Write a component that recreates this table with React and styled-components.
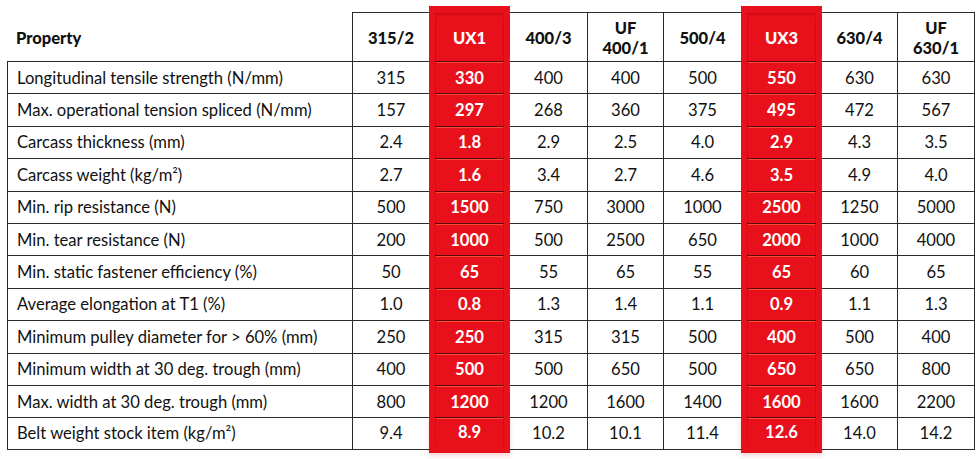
import React from 'react'
import styled, { createGlobalStyle, css } from 'styled-components'

const GlobalStyle = createGlobalStyle`
  html, body {
    margin: 0;
    background: #fff;
  }
  body {
    font-family: "Lato", "Liberation Sans", sans-serif;
    color: #111;
  }
`

const RED = '#e8101b'
const LINE = '#2a2a2a'

const Page = styled.div`
  padding: 12px 0 0 7px;
  width: 980px;
  height: 459px;
  box-sizing: border-box;
  overflow: hidden;
`

const Grid = styled.div`
  display: grid;
  grid-template-columns: 345px 77px 81px 77px 76px 78px 81px 75px 78px;
  grid-template-rows: 49px repeat(12, 32.4px);
  width: 968px;
`

const Cell = styled.div`
  display: flex;
  align-items: center;
  justify-content: ${(p) => (p.$left ? 'flex-start' : 'center')};
  text-align: center;
  box-sizing: border-box;
  padding: ${(p) => (p.$left ? '0 0 0 9px' : '0')};
  font-size: 16.6px;
  border-top: 1px solid ${LINE};
  border-left: ${(p) => (p.$noLeft ? 'none' : `1px solid ${LINE}`)};
  border-right: ${(p) => (p.$last ? `1px solid ${LINE}` : 'none')};
  border-bottom: ${(p) => (p.$bottom ? `1px solid ${LINE}` : 'none')};
  ${(p) =>
    p.$head &&
    css`
      font-weight: 900;
      font-size: 16.5px;
      line-height: 20px;
      padding-top: 2px;
    `}
  ${(p) =>
    p.$blank &&
    css`
      border: none;
      padding-top: 2px;
    `}
`

const HlCell = styled.div`
  background: ${RED};
  padding: 0 6px;
  display: flex;
  box-sizing: border-box;
  ${(p) =>
    p.$head &&
    css`
      margin-top: -6px;
      padding-top: 7px;
    `}
  ${(p) =>
    p.$bottom &&
    css`
      margin-bottom: -3px;
      padding-bottom: 6px;
      box-shadow: 0 3px 5px rgba(230, 20, 30, 0.18);
    `}
`

const HlInner = styled.div`
  flex: 1;
  display: flex;
  align-items: center;
  justify-content: center;
  text-align: center;
  color: #fff;
  font-weight: 700;
  font-size: ${(p) => (p.$head ? '16.5px' : '16.6px')};
  line-height: 20px;
  ${(p) =>
    p.$head
      ? css`
          font-weight: 900;
          box-shadow: inset 1px 0 0 #cf0d18, inset -1px 0 0 #cf0d18,
            inset 0 2px 2px rgba(120, 0, 0, 0.25);
          padding-top: 2px;
        `
      : css`
          border-top: 1px solid #5a0808;
          box-shadow: inset 1px 0 0 #cf0d18, inset -1px 0 0 #cf0d18,
            inset 0 1px 0 #ff4b2e;
        `}
`

const columns = ['315/2', 'UX1', '400/3', 'UF\n400/1', '500/4', 'UX3', '630/4', 'UF\n630/1']
const highlighted = [1, 5]

const rows = [
  ['Longitudinal tensile strength (N/mm)', '315', '330', '400', '400', '500', '550', '630', '630'],
  ['Max. operational tension spliced (N/mm)', '157', '297', '268', '360', '375', '495', '472', '567'],
  ['Carcass thickness (mm)', '2.4', '1.8', '2.9', '2.5', '4.0', '2.9', '4.3', '3.5'],
  ['Carcass weight (kg/m²)', '2.7', '1.6', '3.4', '2.7', '4.6', '3.5', '4.9', '4.0'],
  ['Min. rip resistance (N)', '500', '1500', '750', '3000', '1000', '2500', '1250', '5000'],
  ['Min. tear resistance (N)', '200', '1000', '500', '2500', '650', '2000', '1000', '4000'],
  ['Min. static fastener efficiency (%)', '50', '65', '55', '65', '55', '65', '60', '65'],
  ['Average elongation at T1 (%)', '1.0', '0.8', '1.3', '1.4', '1.1', '0.9', '1.1', '1.3'],
  ['Minimum pulley diameter for > 60% (mm)', '250', '250', '315', '315', '500', '400', '500', '400'],
  ['Minimum width at 30 deg. trough (mm)', '400', '500', '500', '650', '500', '650', '650', '800'],
  ['Max. width at 30 deg. trough (mm)', '800', '1200', '1200', '1600', '1400', '1600', '1600', '2200'],
  ['Belt weight stock item (kg/m²)', '9.4', '8.9', '10.2', '10.1', '11.4', '12.6', '14.0', '14.2'],
]

const lines = (text) =>
  text.split('\n').map((t, i) => (
    <React.Fragment key={i}>
      {i > 0 && <br />}
      {t}
    </React.Fragment>
  ))

const App = () => {
  const isHl = (i) => highlighted.includes(i)
  const afterHl = (i) => highlighted.includes(i - 1)

  return (
    <Page>
      <GlobalStyle />
      <Grid>
        <Cell $head $left $blank>Property</Cell>
        {columns.map((c, i) =>
          isHl(i) ? (
            <HlCell key={c} $head>
              <HlInner $head>{lines(c)}</HlInner>
            </HlCell>
          ) : (
            <Cell key={c} $head $noLeft={afterHl(i)} $last={i === columns.length - 1}>
              <span>{lines(c)}</span>
            </Cell>
          )
        )}

        {rows.map((row, r) => {
          const bottom = r === rows.length - 1
          return (
            <React.Fragment key={row[0]}>
              <Cell $left $bottom={bottom}>{row[0]}</Cell>
              {row.slice(1).map((v, i) =>
                isHl(i) ? (
                  <HlCell key={i} $bottom={bottom}>
                    <HlInner>{v}</HlInner>
                  </HlCell>
                ) : (
                  <Cell
                    key={i}
                    $bottom={bottom}
                    $noLeft={afterHl(i)}
                    $last={i === row.length - 2}
                  >
                    {v}
                  </Cell>
                )
              )}
            </React.Fragment>
          )
        })}
      </Grid>
    </Page>
  )
}

export default App
